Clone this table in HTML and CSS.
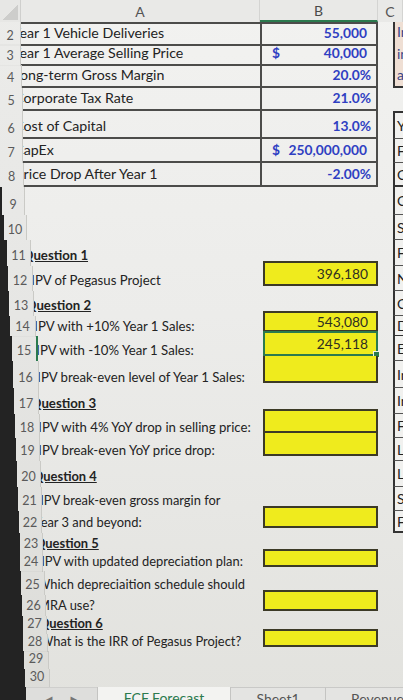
FILE: index.html
```html
<!DOCTYPE html>
<html lang="en">
<head>
<meta charset="utf-8">
<title>FCF Forecast</title>
<link rel="stylesheet" href="styles.css">
</head>
<body>
<div class="sheet">
  <div class="row hdr">
    <div class="bz"></div>
    <div class="corner"></div>
    <div class="ch">A</div>
    <div class="ch ch-sel">B</div>
    <div class="ch">C</div>
  </div>

  <div class="row r2 inp">
    <div class="bz"></div><div class="rn">2</div>
    <div class="a"><span>Year 1 Vehicle Deliveries</span></div>
    <div class="b val"><span></span><span>55,000</span></div>
    <div class="c"><div class="note">Inputs</div></div>
  </div>
  <div class="row r3 inp">
    <div class="bz"></div><div class="rn">3</div>
    <div class="a"><span>Year 1 Average Selling Price</span></div>
    <div class="b val"><span>$</span><span>40,000</span></div>
    <div class="c"><div class="note">in blue</div></div>
  </div>
  <div class="row r4 inp">
    <div class="bz"></div><div class="rn">4</div>
    <div class="a"><span>Long-term Gross Margin</span></div>
    <div class="b val pct"><span></span><span>20.0%</span></div>
    <div class="c"><div class="note last">are given</div></div>
  </div>
  <div class="row r5 inp">
    <div class="bz"></div><div class="rn">5</div>
    <div class="a"><span>Corporate Tax Rate</span></div>
    <div class="b val pct"><span></span><span>21.0%</span></div>
    <div class="c"></div>
  </div>
  <div class="row r6 inp">
    <div class="bz"></div><div class="rn">6</div>
    <div class="a"><span>Cost of Capital</span></div>
    <div class="b val pct"><span></span><span>13.0%</span></div>
    <div class="c"><div class="d first">Year</div></div>
  </div>
  <div class="row r7 inp">
    <div class="bz"></div><div class="rn">7</div>
    <div class="a"><span>CapEx</span></div>
    <div class="b val"><span>$</span><span>250,000,000</span></div>
    <div class="c"><div class="d">Fleet</div></div>
  </div>
  <div class="row r8 inp">
    <div class="bz"></div><div class="rn">8</div>
    <div class="a"><span>Price Drop After Year 1</span></div>
    <div class="b val pct"><span></span><span>-2.00%</span></div>
    <div class="c"><div class="d thick">Cars</div></div>
  </div>

  <div class="row r9">
    <div class="bz"></div><div class="rn">9</div>
    <div class="a"></div><div class="b"></div>
    <div class="c"><div class="d">Cost</div></div>
  </div>
  <div class="row r10">
    <div class="bz"></div><div class="rn">10</div>
    <div class="a"></div><div class="b"></div>
    <div class="c"><div class="d">Sales</div></div>
  </div>
  <div class="row r11">
    <div class="bz"></div><div class="rn">11</div>
    <div class="a"><span class="q">Question 1</span></div><div class="b"></div>
    <div class="c"><div class="d">Fixed</div></div>
  </div>
  <div class="row r12">
    <div class="bz"></div><div class="rn">12</div>
    <div class="a"><span>NPV of Pegasus Project</span></div>
    <div class="b"><div class="box">396,180</div></div>
    <div class="c"><div class="d">Net</div></div>
  </div>
  <div class="row r13">
    <div class="bz"></div><div class="rn">13</div>
    <div class="a"><span class="q">Question 2</span></div><div class="b"></div>
    <div class="c"><div class="d">Cash</div></div>
  </div>
  <div class="row r14">
    <div class="bz"></div><div class="rn">14</div>
    <div class="a"><span>NPV with +10% Year 1 Sales:</span></div>
    <div class="b"><div class="box">543,080</div></div>
    <div class="c"><div class="d thick">Dep.</div></div>
  </div>
  <div class="row r15">
    <div class="bz"></div><div class="rn">15</div>
    <div class="a"><span>NPV with -10% Year 1 Sales:</span></div>
    <div class="b"><div class="box join sel">245,118</div></div>
    <div class="c"><div class="d">EBIT</div></div>
  </div>
  <div class="row r16">
    <div class="bz"></div><div class="rn">16</div>
    <div class="a"><span>NPV break-even level of Year 1 Sales:</span></div>
    <div class="b"><div class="box join"></div></div>
    <div class="c"><div class="d">Interest</div></div>
  </div>
  <div class="row r17">
    <div class="bz"></div><div class="rn">17</div>
    <div class="a"><span class="q">Question 3</span></div><div class="b"></div>
    <div class="c"><div class="d">Income</div></div>
  </div>
  <div class="row r18">
    <div class="bz"></div><div class="rn">18</div>
    <div class="a"><span>NPV with 4% YoY drop in selling price:</span></div>
    <div class="b"><div class="box"></div></div>
    <div class="c"><div class="d">Free</div></div>
  </div>
  <div class="row r19">
    <div class="bz"></div><div class="rn">19</div>
    <div class="a"><span>NPV break-even YoY price drop:</span></div>
    <div class="b"><div class="box join"></div></div>
    <div class="c"><div class="d">Less</div></div>
  </div>
  <div class="row r20">
    <div class="bz"></div><div class="rn">20</div>
    <div class="a"><span class="q">Question 4</span></div><div class="b"></div>
    <div class="c"><div class="d">Less</div></div>
  </div>
  <div class="row r21">
    <div class="bz"></div><div class="rn">21</div>
    <div class="a"><span>NPV break-even gross margin for</span></div><div class="b"></div>
    <div class="c"><div class="d">Salvage</div></div>
  </div>
  <div class="row r22">
    <div class="bz"></div><div class="rn">22</div>
    <div class="a"><span>Year 3 and beyond:</span></div>
    <div class="b"><div class="box"></div></div>
    <div class="c"><div class="d">FCF</div></div>
  </div>
  <div class="row r23">
    <div class="bz"></div><div class="rn">23</div>
    <div class="a"><span class="q">Question 5</span></div><div class="b"></div><div class="c"></div>
  </div>
  <div class="row r24">
    <div class="bz"></div><div class="rn">24</div>
    <div class="a"><span>NPV with updated depreciation plan:</span></div>
    <div class="b"><div class="box"></div></div><div class="c"></div>
  </div>
  <div class="row r25">
    <div class="bz"></div><div class="rn">25</div>
    <div class="a"><span>Which depreciaition schedule should</span></div><div class="b"></div><div class="c"></div>
  </div>
  <div class="row r26">
    <div class="bz"></div><div class="rn">26</div>
    <div class="a"><span>MRA use?</span></div>
    <div class="b"><div class="box"></div></div><div class="c"></div>
  </div>
  <div class="row r27">
    <div class="bz"></div><div class="rn">27</div>
    <div class="a"><span class="q">Question 6</span></div><div class="b"></div><div class="c"></div>
  </div>
  <div class="row r28">
    <div class="bz"></div><div class="rn">28</div>
    <div class="a"><span>What is the IRR of Pegasus Project?</span></div>
    <div class="b"><div class="box"></div></div><div class="c"></div>
  </div>
  <div class="row r29">
    <div class="bz"></div><div class="rn">29</div>
    <div class="a"></div><div class="b"></div><div class="c"></div>
  </div>
  <div class="row r30">
    <div class="bz"></div><div class="rn">30</div>
    <div class="a"></div><div class="b"></div><div class="c"></div>
  </div>

  <div class="tabs">
    <div class="tab-bz"></div>
    <div class="tab-nav"><span>&#9664;</span><span>&#9654;</span></div>
    <div class="tab active">FCF Forecast</div>
    <div class="tab">Sheet1</div>
    <div class="tab left">Revenue</div>
  </div>
</div>
</body>
</html>
```

FILE: styles.css
```css
html, body {
  margin: 0;
  padding: 0;
}

body {
  width: 403px;
  height: 700px;
  overflow: hidden;
  font-family: Lato, "Open Sans", "DejaVu Sans", sans-serif;
  color: #232323;
  background: linear-gradient(#f2f2f0 0%, #ececea 45%, #e2e2de 100%);
}

.sheet {
  display: flex;
  flex-direction: column;
  width: 403px;
  height: 700px;
}

/* --b: dark bezel width, --s: total left shift of column A,
   --fs: label size (the photo's perspective shrinks lower rows) */
.row {
  display: grid;
  grid-template-columns: var(--b, 0px) calc(var(--s, 0px) - var(--b, 0px) + 21px) 1fr 118px 25px;
  height: var(--h, 22px);
  flex: none;
}

.hdr { --h: 22px; --b: 0px;  --s: 0px; }
.r2  { --h: 22px; --b: 0px;  --s: 0px; }
.r3  { --h: 21px; --b: 0px;  --s: 0px; }
.r4  { --h: 23px; --b: 0px;  --s: 1px; }
.r5  { --h: 23px; --b: 0px;  --s: 2px; }
.r6  { --h: 28px; --b: 0px;  --s: 2px; }
.r7  { --h: 24px; --b: 0px;  --s: 2px; }
.r8  { --h: 24px; --b: 0px;  --s: 3px; }
.r9  { --h: 28px; --b: 2px;  --s: 4px; }
.r10 { --h: 25px; --b: 4px;  --s: 6px; }
.r11 { --h: 26px; --b: 7px;  --s: 10px; }
.r12 { --h: 25px; --b: 8px;  --s: 12px; }
.r13 { --h: 25px; --b: 9px;  --s: 13px; }
.r14 { --h: 20px; --b: 10px; --s: 15px; }
.r15 { --h: 25px; --b: 12px; --s: 17px; }
.r16 { --h: 27px; --b: 13px; --s: 18px; }
.r17 { --h: 26px; --b: 14px; --s: 18px; }
.r18 { --h: 24px; --b: 15px; --s: 19px; }
.r19 { --h: 23px; --b: 16px; --s: 19px; }
.r20 { --h: 26px; --b: 17px; --s: 20px; }
.r21 { --h: 24px; --b: 18px; --s: 21px; }
.r22 { --h: 22px; --b: 19px; --s: 21px; }
.r23 { --h: 21px; --b: 20px; --s: 22px; }
.r24 { --h: 17px; --b: 20px; --s: 22px; }
.r25 { --h: 24px; --b: 21px; --s: 24px; }
.r26 { --h: 21px; --b: 22px; --s: 25px; }
.r27 { --h: 18px; --b: 23px; --s: 26px; }
.r28 { --h: 17px; --b: 23px; --s: 27px; }
.r29 { --h: 18px; --b: 24px; --s: 28px; }
.r30 { --h: 18px; --b: 25px; --s: 29px; }

.r11, .r12, .r13, .r14, .r15, .r16, .r17, .r18, .r19 { --fs: 13.2px; }
.r20, .r21, .r22, .r23, .r24, .r25, .r26, .r27, .r28, .r29, .r30 { --fs: 12.9px; }

.bz {
  background: #232323;
}

/* column header row */
.corner {
  background:
    linear-gradient(to bottom right, transparent 50%, #cdcdcb 50%) no-repeat right 2px bottom 2px / 15px 15px,
    #e7e7e5;
  border-right: 1px solid #cfcfcd;
}
.ch {
  display: flex;
  align-items: center;
  justify-content: center;
  font-size: 14px;
  color: #555;
  background: #e9e9e7;
  border-right: 1px solid #d4d4d2;
  box-sizing: border-box;
}
.ch-sel {
  border-bottom: 2px solid #2b7a4e;
  color: #4a4a4a;
}

/* row numbers */
.rn {
  display: flex;
  align-items: flex-end;
  justify-content: center;
  padding-bottom: 3px;
  font-size: 12.5px;
  color: #5a5a5a;
  background: rgba(0, 0, 0, 0.025);
  border-right: 1px solid #cacac6;
  box-sizing: border-box;
}
.r15 .rn {
  border-right: 2px solid #2b7a4e;
}

/* column A (scrolled a few pixels, so the first letter is cut) */
.a {
  display: flex;
  align-items: flex-end;
  padding-bottom: 2px;
  overflow: hidden;
  font-size: var(--fs, 14.2px);
  line-height: 18px;
  box-sizing: border-box;
}
.a > span {
  margin-left: -0.62em;
  white-space: nowrap;
}
.q {
  font-weight: 700;
  text-decoration: underline;
}

/* input table rows 2-8 */
.inp .a {
  border-bottom: 2px solid #4c4c4a;
}
.inp .b {
  border-left: 2px solid #4c4c4a;
  border-right: 2px solid #4c4c4a;
  border-bottom: 2px solid #4c4c4a;
}
.r2 .a, .r2 .b {
  border-top: 2px solid #4c4c4a;
}
.b {
  display: flex;
  box-sizing: border-box;
}
.val {
  justify-content: space-between;
  align-items: flex-end;
  padding: 0 9px 2px 10px;
  font-size: 13.8px;
  line-height: 18px;
  font-weight: 700;
  color: #2f3fc2;
}
.val.pct {
  padding-right: 5px;
}

/* yellow answer boxes */
.box {
  flex: 1;
  margin: -5px 0 5px 3px;
  background: #efeb1d;
  border: 2px solid #3c3a26;
  box-sizing: border-box;
  display: flex;
  align-items: center;
  justify-content: flex-end;
  padding-right: 8px;
  font-size: 13.8px;
  color: #2e2e22;
  position: relative;
}
.box.join {
  border-top: none;
}
.box.sel {
  border: 2px solid #2b7a4e;
}
.box.sel::after {
  content: "";
  position: absolute;
  right: -4px;
  bottom: -4px;
  width: 5px;
  height: 5px;
  background: #2b7a4e;
  border: 1px solid #f0f0ee;
}

/* column C / D */
.c {
  display: flex;
  padding-left: 15px;
  box-sizing: border-box;
}
.note {
  flex: 1;
  background: #efdfd4;
  border-left: 2px solid #333;
  padding-left: 2px;
  overflow: hidden;
  white-space: nowrap;
  font-size: 14px;
  line-height: 20px;
  color: #3a4486;
}
.note.last {
  border-bottom: 2px solid #333;
}
.d {
  flex: 1;
  display: flex;
  align-items: center;
  padding-left: 2px;
  overflow: hidden;
  white-space: nowrap;
  font-size: 14px;
  color: #222;
  background: #f1f1ef;
  border-left: 2px solid #333;
  border-bottom: 1px solid #555;
}
.d.first {
  border-top: 2px solid #333;
}
.d.thick {
  border-bottom: 2px solid #333;
}
.r22 .d {
  border-bottom: 2px solid #333;
}

/* sheet tabs */
.tabs {
  flex: none;
  display: grid;
  grid-template-columns: 26px 71px 133px 95px 1fr;
  height: 13px;
  overflow: hidden;
  font-size: 14px;
  line-height: 16px;
}
.tab-bz {
  background: #232323;
}
.tab-nav {
  display: flex;
  justify-content: center;
  gap: 18px;
  padding-top: 4px;
  font-family: "DejaVu Sans", sans-serif;
  font-size: 10px;
  color: #777;
  background: #dededc;
  border-top: 1px solid #cfcfcd;
}
.tab {
  text-align: center;
  padding-top: 3px;
  color: #555;
  background: #e4e4e2;
  border-top: 1px solid #c9c9c7;
  border-left: 1px solid #c4c4c2;
  box-sizing: border-box;
}
.tab.active {
  background: #f3f3f1;
  color: #2b7a4e;
  border-top: none;
}
.tab.left {
  text-align: left;
  padding-left: 25px;
}
```
